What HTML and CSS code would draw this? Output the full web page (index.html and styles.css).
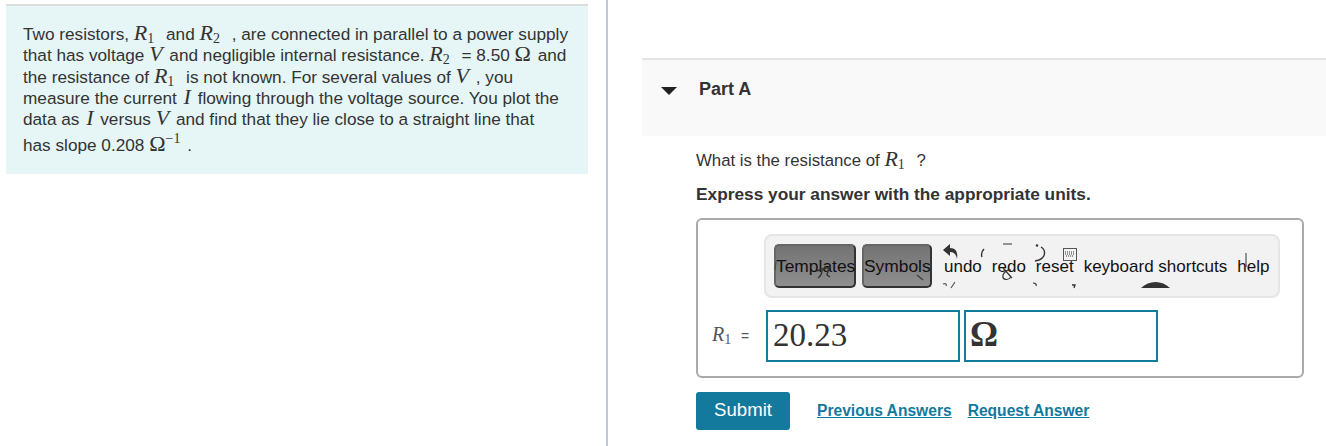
FILE: index.html
```html
<!DOCTYPE html>
<html lang="en">
  <head>
    <meta charset="UTF-8" />
    <title>Part A</title>
    <link rel="stylesheet" href="styles.css">
  </head>
  <body>
    <div class="page">
      <div class="left">
        <div class="intro">
          <p>Two resistors, <i class="m">R<sub>1</sub></i> and <i class="m">R<sub>2</sub></i> , are connected in parallel to a power supply<br>that has voltage <i class="m">V</i> and negligible internal resistance. <i class="m">R<sub>2</sub></i> = 8.50 <span class="m">Ω</span> and<br>the resistance of <i class="m">R<sub>1</sub></i> is not known. For several values of <i class="m">V</i> , you<br>measure the current <i class="m wide">I</i> flowing through the voltage source. You plot the<br>data as <i class="m wide">I</i> versus <i class="m">V</i> and find that they lie close to a straight line that<br><span class="slope">has slope 0.208 <span class="m">Ω<sup>−1</sup></span> .</span></p>
        </div>
      </div>
      <div class="right">
        <div class="part-head">
          <span class="arrow"></span>
          <span class="part-title">Part A</span>
        </div>
        <div class="part-body">
          <p class="question">What is the resistance of <i class="m">R<sub>1</sub></i> ?</p>
          <p class="hint">Express your answer with the appropriate units.</p>
          <div class="answer">
            <div class="toolbar">
              <button type="button" class="tool-btn btn-templates">Templates</button>
              <button type="button" class="tool-btn btn-symbols">Symbols</button>
              <span class="tool-link">undo</span>
              <span class="tool-link">redo</span>
              <span class="tool-link">reset</span>
              <span class="tool-link">keyboard shortcuts</span>
              <span class="tool-link">help</span>
              <svg class="frag" viewBox="0 0 1326 446" aria-hidden="true">
                <path d="M950 244l-7 6 7 6v-4c4 0 6 2 7 7 1-7-1-11-7-11z" fill="#333"/>
                <path d="M984 249c-2 2-3 5-2 8" fill="none" stroke="#333" stroke-width="1.4"/>
                <path d="M1003 244h9" fill="none" stroke="#333" stroke-width="1"/>
                <path d="M1036 245l2 1" stroke="#333" stroke-width="2"/>
                <path d="M1041 247c5 3 5 10-2 13l-4 1" fill="none" stroke="#333" stroke-width="1.4"/>
                <rect x="1063.5" y="248.5" width="13" height="12" fill="#f2f2f2" stroke="#555" stroke-width="1"/>
                <path d="M1065 252h10M1065 254h10M1066 256h8" stroke="#333" stroke-width="1" stroke-dasharray="1 1"/>
                <path d="M1246 253v14" stroke="#333" stroke-width="1"/>
                <path d="M1141 288c8-8 21-8 29 0z" fill="#333"/>
                <path d="M943 284c3-1 4 0 3 2M955 282l-4 6" fill="none" stroke="#555" stroke-width="1.2"/>
                <path d="M1033 283c2 0 4 1 3 3" fill="none" stroke="#333" stroke-width="1.2"/>
                <path d="M1072 285h3l-1 3" fill="none" stroke="#333" stroke-width="1.3"/>
                <path d="M1003 268c3 3 6 7 9 10M1011 270c-3-1-7 2-8 5-1 5 5 6 8 2" fill="none" stroke="#333" stroke-width="1.2"/>
                <path d="M822 270c0 3-1 6-4 8M829 267l-2 8 3 2M817 271c4-2 9-3 14-4" fill="none" stroke="#333" stroke-width="1.4"/>
                <path d="M776 262l-1 8" stroke="#444" stroke-width="1"/>
                <path d="M917 275l6 5" stroke="#444" stroke-width="1.6"/>
              </svg>
            </div>
            <div class="answer-row">
              <span class="answer-label"><i class="m">R<sub>1</sub></i> <span class="eq">=</span></span>
              <input class="field" type="text" value="20.23" />
              <input class="field unit" type="text" value="Ω" />
            </div>
          </div>
          <div class="actions">
            <button type="button" class="submit">Submit</button>
            <a class="action-link" href="#">Previous Answers</a>
            <a class="action-link" href="#">Request Answer</a>
          </div>
        </div>
      </div>
    </div>
  </body>
</html>
```

FILE: styles.css
```css
html, body {
  margin: 0;
  padding: 0;
  background: #fff;
}
body {
  font-family: "Liberation Sans", Arial, sans-serif;
  font-size: 16.8px;
  color: #333;
}
p {
  margin: 0;
}
.page {
  display: flex;
  width: 1326px;
  height: 446px;
  overflow: hidden;
}

.left {
  width: 608px;
  flex: none;
  padding: 4px 18px 0 6px;
  box-sizing: border-box;
  border-right: 2px solid #bcc8d8;
}
.intro {
  background: #e6f6f6;
  border-top: 2px solid #dedede;
  padding: 18px 0 0 17px;
  height: 170px;
  box-sizing: border-box;
  font-size: 17.2px;
  line-height: 21.3px;
  white-space: nowrap;
}
.slope {
  display: inline-block;
  margin-top: 5px;
}
.m {
  font-family: "Liberation Serif", "Times New Roman", serif;
  font-size: 22px;
  line-height: 0;
  padding-right: 2px;
}
.wide {
  padding: 0 2px;
}
.m sub, .m sup {
  font-style: normal;
  font-size: 14px;
  line-height: 0;
}
.m sub {
  vertical-align: -3px;
  padding-right: 5px;
}
.m sup {
  vertical-align: 8px;
}

.right {
  flex: 1;
  padding: 58px 0 0 34px;
}
.part-head {
  display: flex;
  align-items: flex-start;
  height: 78px;
  box-sizing: border-box;
  background: #f9f9f9;
  border-top: 2px solid #e5e5e5;
  padding: 19px 0 0 19px;
}
.arrow {
  width: 0;
  height: 0;
  margin-top: 8px;
  border-left: 8px solid transparent;
  border-right: 8px solid transparent;
  border-top: 8px solid #222;
}
.part-title {
  margin-left: 22px;
  font-size: 18px;
  font-weight: bold;
}
.part-body {
  padding: 15px 22px 0 54px;
}
.question {
  line-height: 20px;
}
.hint {
  margin-top: 13px;
  font-size: 17.3px;
  font-weight: bold;
  line-height: 20px;
}
.answer {
  margin-top: 14px;
  height: 160px;
  box-sizing: border-box;
  border: 2px solid #aaa;
  border-radius: 6px;
  padding: 14px 22px 0 66px;
}
.toolbar {
  display: flex;
  align-items: center;
  height: 64px;
  box-sizing: border-box;
  background: #f2f2f2;
  border: 2px solid #e5e5e5;
  border-radius: 8px;
  padding: 0 8px;
  color: #111;
  font-size: 17px;
  white-space: nowrap;
}
.tool-btn {
  height: 44px;
  padding: 0;
  font-family: inherit;
  font-size: 17.4px;
  color: #111;
  background: linear-gradient(#737373, #8f8f8f);
  border: 2px solid #333;
  border-top-color: #666;
  border-left-color: #666;
  border-radius: 5px;
}
.btn-templates {
  width: 82px;
}
.btn-symbols {
  width: 70px;
  margin-left: 6px;
}
.tool-link {
  margin-left: 10px;
  padding-top: 1px;
}
.tool-link:nth-of-type(1) {
  margin-left: 12px;
}
.frag {
  position: absolute;
  left: 0;
  top: 0;
  width: 1326px;
  height: 446px;
  pointer-events: none;
}
.answer-row {
  display: flex;
  align-items: center;
  margin-top: 12px;
  margin-left: -52px;
}
.answer-label {
  width: 54px;
  font-size: 14px;
  white-space: nowrap;
  color: #555;
}
.answer-label .m {
  font-size: 20px;
}
.answer-label .m sub {
  padding-right: 2px;
}
.eq {
  margin-left: 2px;
}
.field {
  width: 194px;
  height: 52px;
  box-sizing: border-box;
  border: 2px solid #137c9f;
  padding: 0 5px 2px;
  margin-right: 4px;
  font-family: "Liberation Serif", "Times New Roman", serif;
  font-size: 33px;
  color: #333;
  outline: none;
}
.unit {
  font-size: 35px;
  font-weight: bold;
  padding-left: 4px;
}
.actions {
  display: flex;
  align-items: center;
  margin-top: 14px;
}
.submit {
  width: 94px;
  height: 38px;
  padding: 0 0 3px;
  border: 0;
  border-radius: 3px;
  background: #137a9e;
  color: #fff;
  font-family: inherit;
  font-size: 18.6px;
}
.action-link {
  color: #137a9e;
  font-size: 15.6px;
  font-weight: bold;
  margin-left: 16px;
}
.submit + .action-link {
  margin-left: 27px;
}
```
